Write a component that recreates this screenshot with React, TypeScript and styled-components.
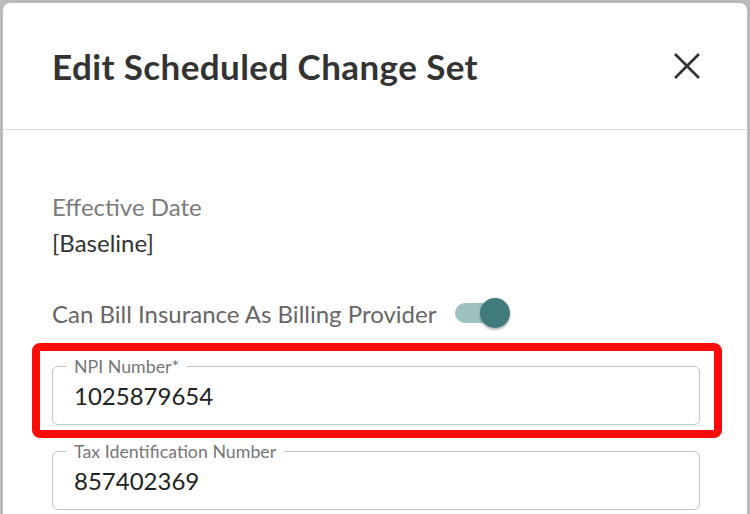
import React from "react"
import styled, { createGlobalStyle } from "styled-components"

const GlobalStyle = createGlobalStyle`
  html, body {
    margin: 0;
    padding: 0;
    height: 100%;
    overflow: hidden;
  }
  body {
    font-family: Lato, "Open Sans", sans-serif;
    background: #bababa;
  }
  #root {
    height: 100%;
  }
`

const Backdrop = styled.div`
  display: flex;
  height: 100%;
  padding: 3px 3px 0 3px;
  box-sizing: border-box;
  background: #bababa;
`

const Dialog = styled.div`
  flex: 1;
  display: flex;
  flex-direction: column;
  background: #ffffff;
  border-radius: 7px 7px 0 0;
  overflow: hidden;
`

const Header = styled.div`
  display: flex;
  align-items: center;
  justify-content: space-between;
  height: 126px;
  padding: 0 47px 0 49px;
  border-bottom: 1px solid #e0e0e0;
  flex-shrink: 0;
`

const Title = styled.h2`
  margin: 0;
  font-size: 35px;
  font-weight: 700;
  color: #333333;
  letter-spacing: 0.4px;
`

const CloseButton = styled.button`
  display: flex;
  align-items: center;
  justify-content: center;
  width: 26px;
  height: 26px;
  padding: 0;
  border: none;
  background: transparent;
  color: #333333;
  cursor: pointer;
`

const Body = styled.div`
  display: flex;
  flex-direction: column;
  padding: 59px 47px 0 49px;
`

const FieldLabel = styled.div`
  font-size: 24px;
  line-height: 36px;
  color: #7b7b7b;
`

const FieldValue = styled.div`
  font-size: 24px;
  line-height: 36px;
  color: #333333;
`

const SwitchRow = styled.div`
  display: flex;
  align-items: center;
  gap: 19px;
  height: 36px;
  margin-top: 34px;
  font-size: 24px;
  color: #666666;
`

const Track = styled.div<{ on: boolean }>`
  position: relative;
  width: 49px;
  height: 20px;
  border-radius: 10px;
  background: ${({ on }) => (on ? "#9fc2c1" : "#bdbdbd")};
`

const Thumb = styled.div<{ on: boolean }>`
  position: absolute;
  top: -5px;
  left: ${({ on }) => (on ? "25px" : "-5px")};
  width: 30px;
  height: 30px;
  border-radius: 50%;
  background: ${({ on }) => (on ? "#3e7b7a" : "#fafafa")};
  box-shadow: 0 2px 2px rgba(0, 0, 0, 0.22), 0 1px 4px rgba(0, 0, 0, 0.12);
`

const Highlighted = styled.div`
  position: relative;
  margin-top: 35px;
`

const Highlight = styled.div`
  position: absolute;
  top: -23px;
  left: -20px;
  right: -22px;
  bottom: -13px;
  border: 8px solid #ff0a0a;
  border-radius: 8px;
  pointer-events: none;
`

const Outlined = styled.div<{ gapTop?: number }>`
  position: relative;
  display: flex;
  align-items: center;
  height: 59px;
  margin-top: ${({ gapTop }) => gapTop ?? 0}px;
  padding: 0 21px;
  border: 1px solid #c4c4c4;
  border-radius: 6px;
  box-sizing: border-box;
`

const Legend = styled.span`
  position: absolute;
  top: -12px;
  left: 13px;
  padding: 0 8px;
  background: #ffffff;
  font-size: 17.8px;
  line-height: 22px;
  color: #767676;
`

const InputValue = styled.span`
  font-size: 24px;
  color: #222222;
`

const CloseIcon = () => (
  <svg width="26" height="26" viewBox="0 0 26 26" fill="none">
    <path d="M2 2L24 24M24 2L2 24" stroke="currentColor" strokeWidth="2.7" strokeLinecap="square" />
  </svg>
)

const Switch: React.FC<{ on: boolean }> = ({ on }) => (
  <Track on={on}>
    <Thumb on={on} />
  </Track>
)

const TextField: React.FC<{ label: string; value: string; gapTop?: number }> = ({ label, value, gapTop }) => (
  <Outlined gapTop={gapTop}>
    <Legend>{label}</Legend>
    <InputValue>{value}</InputValue>
  </Outlined>
)

export default function App() {
  return (
    <>
      <GlobalStyle />
      <Backdrop>
        <Dialog>
          <Header>
            <Title>Edit Scheduled Change Set</Title>
            <CloseButton aria-label="Close the dialog">
              <CloseIcon />
            </CloseButton>
          </Header>
          <Body>
            <FieldLabel>Effective Date</FieldLabel>
            <FieldValue>[Baseline]</FieldValue>
            <SwitchRow>
              <span>Can Bill Insurance As Billing Provider</span>
              <Switch on />
            </SwitchRow>
            <Highlighted>
              <TextField label="NPI Number*" value="1025879654" />
              <Highlight />
            </Highlighted>
            <TextField label="Tax Identification Number" value="857402369" gapTop={26} />
          </Body>
        </Dialog>
      </Backdrop>
    </>
  )
}
